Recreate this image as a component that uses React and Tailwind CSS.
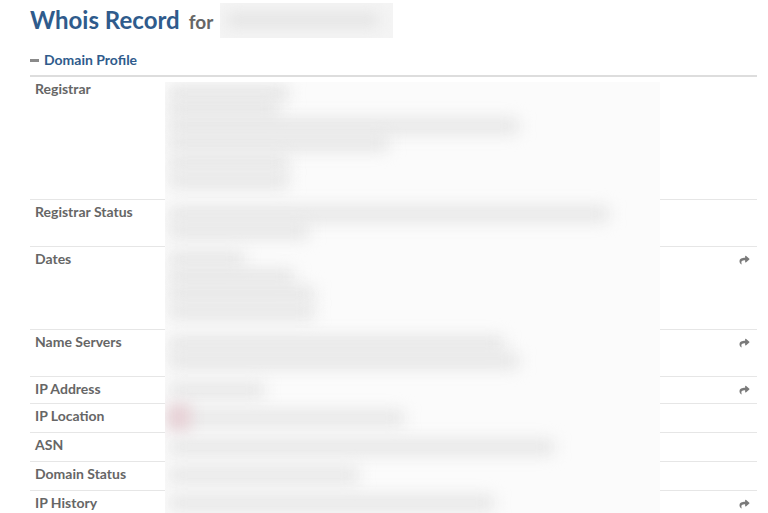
import React from 'react';
import { FaShare } from 'react-icons/fa';

const rows = [
  { label: 'Registrar', h: 'h-[122px]', first: true },
  { label: 'Registrar Status', h: 'h-[47px]' },
  { label: 'Dates', h: 'h-[83px]', share: true },
  { label: 'Name Servers', h: 'h-[47px]', share: true },
  { label: 'IP Address', h: 'h-[27px]', share: true },
  { label: 'IP Location', h: 'h-[29px]' },
  { label: 'ASN', h: 'h-[29px]' },
  { label: 'Domain Status', h: 'h-[29px]' },
  { label: 'IP History', h: 'h-[29px]', share: true },
];

// blurred value lines: top offset and width inside the redacted box
const blurLines = [
  { top: 4, w: 120 }, { top: 20, w: 110 }, { top: 37, w: 350 }, { top: 54, w: 220 },
  { top: 74, w: 120 }, { top: 92, w: 120 },
  { top: 125, w: 440 }, { top: 142, w: 140 },
  { top: 170, w: 75 }, { top: 188, w: 125 }, { top: 205, w: 145 }, { top: 223, w: 145 },
  { top: 255, w: 335 }, { top: 272, w: 350 },
  { top: 301, w: 95 },
  { top: 329, w: 235 },
  { top: 358, w: 385 },
  { top: 386, w: 190 },
  { top: 414, w: 325 },
];

const Row = ({ row }) => (
  <div className={`flex ${row.h} ${row.first ? '' : 'border-t border-[#e6e6e6]'}`}>
    <div className="w-[135px] shrink-0 pl-[5px] pt-[3px] text-[14px] leading-[18px] font-bold text-[#666]">
      {row.label}
    </div>
    <div className="flex-1" />
    <div className="w-[30px] shrink-0 flex justify-end pr-[7px] pt-[8px]">
      {row.share && <FaShare className="w-[11px] h-[10px] text-[#7a7a7a]" />}
    </div>
  </div>
);

const App = () => {
  return (
    <div className="min-h-screen bg-white pl-[30px] pr-[11px] font-['Lato','Liberation_Sans',sans-serif] overflow-hidden h-[513px]">
      {/* Title */}
      <div className="flex items-center h-[40px]">
        <h1 className="text-[24px] leading-[32px] font-bold text-[#2f5b8c]">Whois Record</h1>
        <span className="ml-[9px] mt-[3px] text-[19px] leading-[28px] font-bold text-[#666]">for</span>
        <span className="ml-[7px] mt-[1px] w-[173px] h-[35px] bg-[#f4f4f4] relative overflow-hidden">
          <span className="absolute left-[8px] top-[10px] w-[150px] h-[14px] bg-[#e4e4e4] blur-[7px]" />
        </span>
      </div>

      {/* Section heading */}
      <div className="mt-[11px] flex items-center pb-[6px] border-b-2 border-[#dddddd]">
        <span className="w-[9px] h-[3px] bg-[#8a8a8a]" />
        <span className="ml-[5px] text-[14px] leading-[18px] font-bold text-[#2f5b8c]">Domain Profile</span>
      </div>

      {/* Rows */}
      <div className="relative">
        {rows.map((row) => (
          <Row key={row.label} row={row} />
        ))}

        {/* redacted value area */}
        <div className="absolute left-[135px] top-[5px] w-[495px] h-[440px] bg-[#fbfbfb] overflow-hidden">
          {blurLines.map((l, i) => (
            <div
              key={i}
              className="absolute left-[4px] h-[14px] bg-[#e3e3e3] blur-[8px]"
              style={{ top: l.top, width: l.w }}
            />
          ))}
          <div className="absolute left-[2px] top-[322px] w-[24px] h-[26px] bg-[#e8d2d7] blur-[7px]" />
        </div>
      </div>
    </div>
  );
};

export default App;
